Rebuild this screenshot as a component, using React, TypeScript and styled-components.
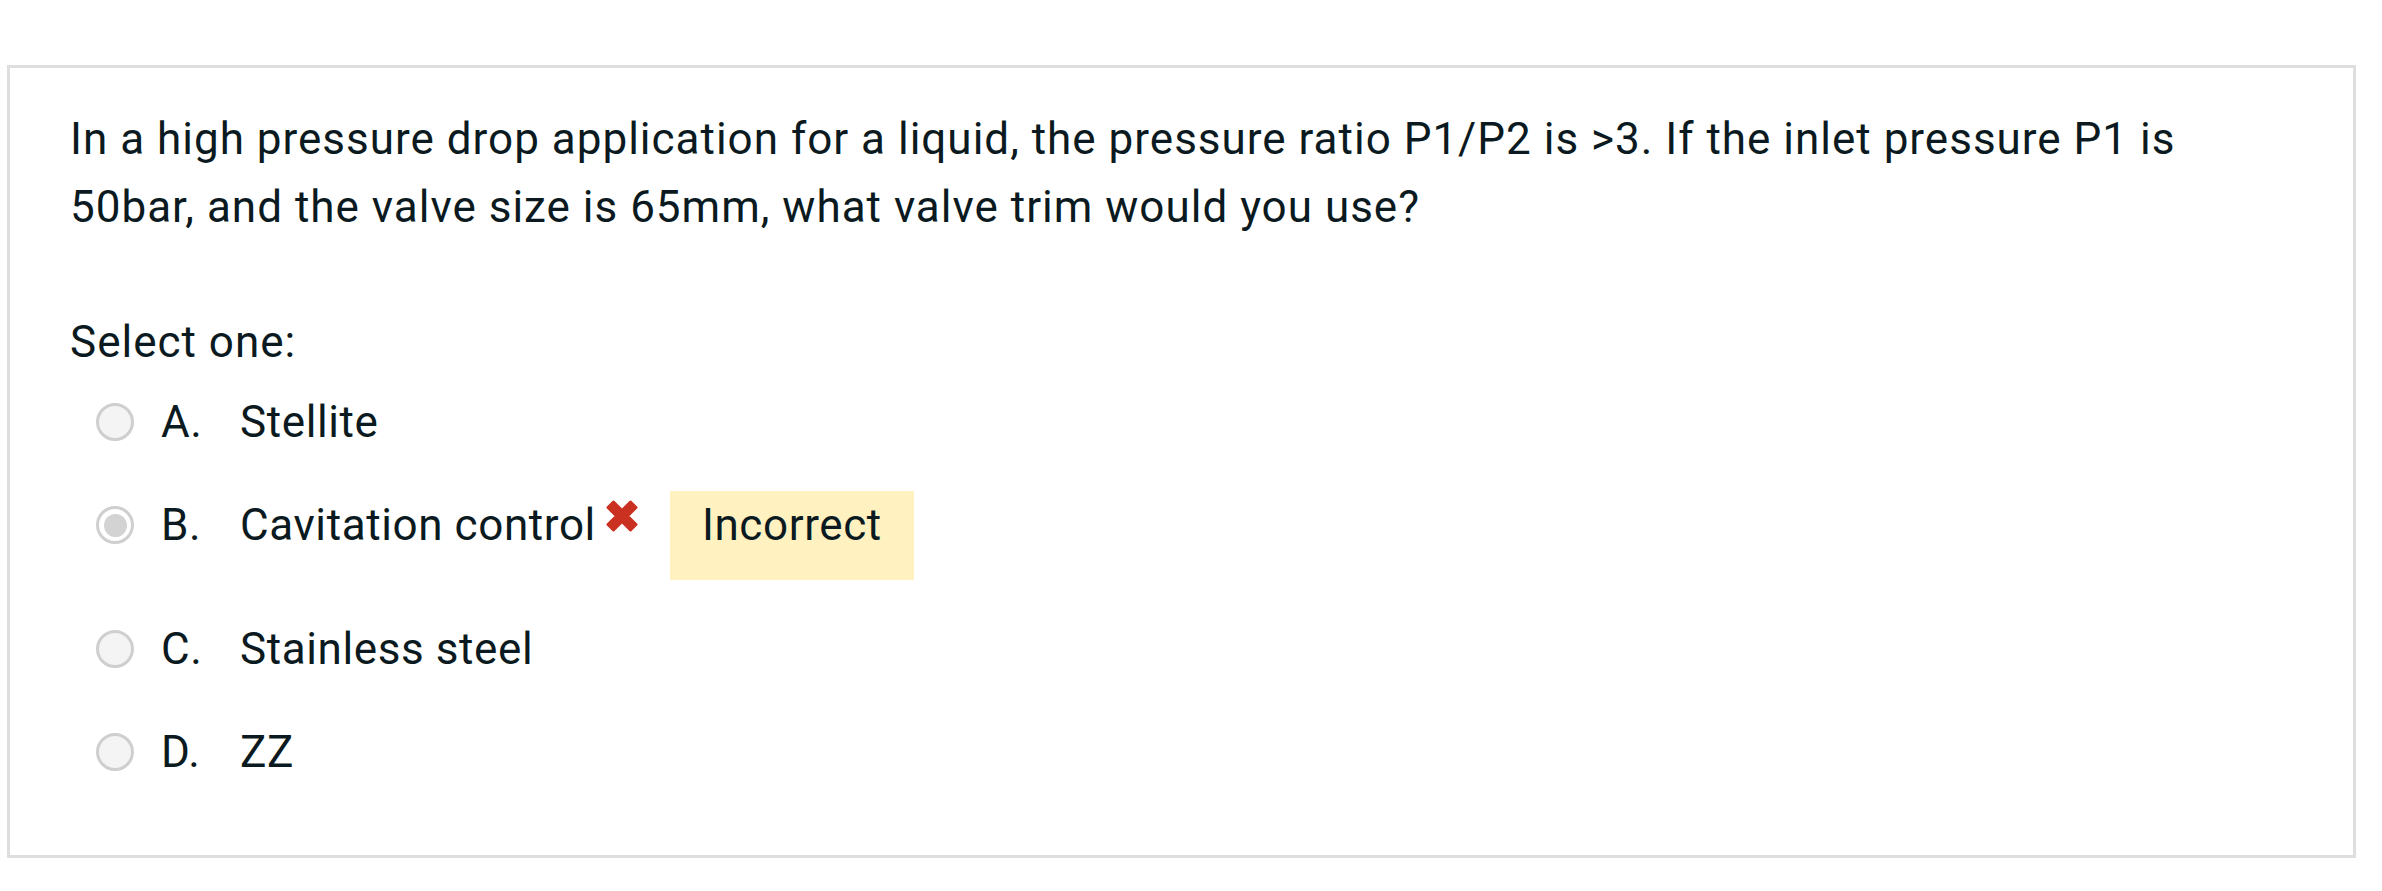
import React from "react";
import styled, { createGlobalStyle } from "styled-components";

const GlobalStyle = createGlobalStyle`
  body {
    margin: 0;
    background: #ffffff;
    font-family: Roboto, "Liberation Sans", sans-serif;
    color: #0b1a20;
  }
`;

type Option = {
  letter: string;
  text: string;
  checked?: boolean;
  incorrect?: boolean;
};

const options: Option[] = [
  { letter: "A.", text: "Stellite" },
  { letter: "B.", text: "Cavitation control", checked: true, incorrect: true },
  { letter: "C.", text: "Stainless steel" },
  { letter: "D.", text: "ZZ" },
];

const App = () => {
  return (
    <>
      <GlobalStyle />
      <Page>
        <QuestionCard>
          <QuestionText>
            In a high pressure drop application for a liquid, the pressure ratio P1/P2 is &gt;3. If the inlet pressure P1 is
            50bar, and the valve size is 65mm, what valve trim would you use?
          </QuestionText>
          <Prompt>Select one:</Prompt>
          <AnswerList>
            {options.map((opt) => (
              <AnswerRow key={opt.letter}>
                <Radio $checked={!!opt.checked} />
                <Letter>{opt.letter}</Letter>
                <AnswerText>{opt.text}</AnswerText>
                {opt.incorrect && (
                  <>
                    <CrossIcon viewBox="0 0 32 32">
                      <path d="M2 7.5 L7.5 2 L16 10.5 L24.5 2 L30 7.5 L21.5 16 L30 24.5 L24.5 30 L16 21.5 L7.5 30 L2 24.5 L10.5 16 Z" />
                    </CrossIcon>
                    <Feedback>Incorrect</Feedback>
                  </>
                )}
              </AnswerRow>
            ))}
          </AnswerList>
        </QuestionCard>
      </Page>
    </>
  );
};

const Page = styled.div`
  padding: 65px 26px 0 7px;
`;

const QuestionCard = styled.div`
  border: 3px solid #dedede;
  padding: 37px 60px 69px 60px;
  font-size: 44px;
  line-height: 68px;
  letter-spacing: 1px;
`;

const QuestionText = styled.p`
  margin: 0 60px 0 0;
`;

const Prompt = styled.div`
  margin-top: 67px;
`;

const AnswerList = styled.div`
  margin-top: 12px;
  padding-left: 26px;
  display: flex;
  flex-direction: column;
  gap: 35px;
  letter-spacing: 0.6px;
`;

const AnswerRow = styled.div`
  display: flex;
  align-items: flex-start;
`;

const Radio = styled.span<{ $checked: boolean }>`
  flex: none;
  box-sizing: border-box;
  width: 38px;
  height: 38px;
  margin-top: 15px;
  margin-right: 27px;
  border-radius: 50%;
  border: 3px solid #cfcfcf;
  background: ${(p) => (p.$checked ? "#ffffff" : "#f4f4f4")};
  display: flex;
  align-items: center;
  justify-content: center;
  &::after {
    content: "";
    display: ${(p) => (p.$checked ? "block" : "none")};
    width: 23px;
    height: 23px;
    border-radius: 50%;
    background: #d3d3d3;
  }
`;

const Letter = styled.span`
  width: 79px;
  flex: none;
`;

const AnswerText = styled.span``;

const CrossIcon = styled.svg`
  width: 32px;
  height: 32px;
  margin: 9px 0 0 10px;
  flex: none;
  path {
    fill: #ca3120;
    stroke: #ca3120;
    stroke-width: 3;
    stroke-linejoin: round;
  }
`;

const Feedback = styled.div`
  margin-left: 32px;
  padding: 0 32px 21px;
  background: #fff2c0;
`;

export default App;
